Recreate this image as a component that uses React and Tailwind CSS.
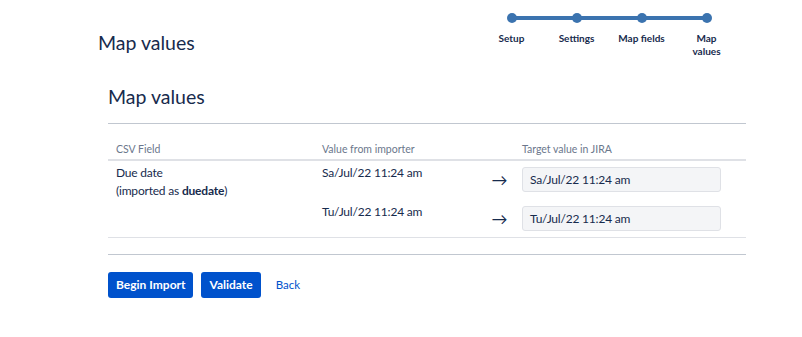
import React from "react";

const steps = ["Setup", "Settings", "Map fields", "Map values"];

const rows = [
  { from: "Sa/Jul/22 11:24 am", to: "Sa/Jul/22 11:24 am" },
  { from: "Tu/Jul/22 11:24 am", to: "Tu/Jul/22 11:24 am" },
];

const Tracker = () => (
  <div className="relative flex">
    <div className="absolute left-[32px] right-[32px] top-[11px] h-[4px] bg-[#3b73af]" />
    {steps.map((s) => (
      <div key={s} className="w-[65px] flex flex-col items-center">
        <div className="relative mt-[8px] w-[10px] h-[10px] rounded-full bg-[#3b73af]" />
        <div className={`mt-[9px] text-[10px] leading-[13px] font-bold text-[#172b4d] text-center ${s === "Map values" ? "w-[36px]" : "w-[65px]"}`}>
          {s}
        </div>
      </div>
    ))}
  </div>
);

const App = () => {
  return (
    <div className="w-[802px] h-[337px] bg-white font-['Lato',sans-serif] text-[#172b4d]">
      {/* header */}
      <div className="flex pl-[98px] pt-[5px] h-[70px]">
        <h1 className="mt-[25px] text-[19.5px] leading-[26px] w-[381px]">Map values</h1>
        <Tracker />
      </div>

      <div className="mx-[108px] w-[638px]">
        <h2 className="mt-[14px] text-[19.5px] leading-[26px]">Map values</h2>
        <div className="mt-[13px] border-t border-[#c1c7d0]" />

        {/* table */}
        <div className="mt-[18px] flex h-[19px] items-center border-b-2 border-[#dfe1e6] pb-[2px] text-[10.5px] text-[#6b778c]">
          <div className="w-[206px] pl-[8px]">CSV Field</div>
          <div className="w-[200px] pl-[8px]">Value from importer</div>
          <div className="pl-[8px]">Target value in JIRA</div>
        </div>

        <div className="flex border-b border-[#dfe1e6] text-[12px] leading-[18px] tracking-[-0.2px]">
          <div className="w-[206px] pl-[8px] pt-[3px]">
            <div>Due date</div>
            <div>
              (imported as <span className="font-bold">duedate</span>)
            </div>
          </div>
          <div className="flex-1">
            {rows.map((r, i) => (
              <div key={i} className={`flex ${i === 0 ? "h-[39px]" : "h-[37px]"}`}>
                <div className="w-[171px] pl-[8px] pt-[3px]">{r.from}</div>
                <div className="w-[29px] pt-[9px] text-center text-[16px] leading-[20px]">→</div>
                <div className="pl-[8px] pt-[6px]">
                  <div className="w-[199px] h-[25px] flex items-center px-[7px] bg-[#f4f5f7] border border-[#dfe1e6] rounded-[3px]">
                    {r.to}
                  </div>
                </div>
              </div>
            ))}
          </div>
        </div>

        <div className="mt-[16px] border-t border-[#c1c7d0]" />

        <div className="mt-[17px] flex items-center gap-[8px]">
          <button className="h-[26px] px-[8px] rounded-[3px] bg-[#0052cc] text-white text-[12px] font-bold">
            Begin Import
          </button>
          <button className="h-[26px] px-[8px] rounded-[3px] bg-[#0052cc] text-white text-[12px] font-bold">
            Validate
          </button>
          <a className="ml-[7px] text-[11.5px] text-[#0052cc]">Back</a>
        </div>
      </div>
    </div>
  );
};

export default App;
